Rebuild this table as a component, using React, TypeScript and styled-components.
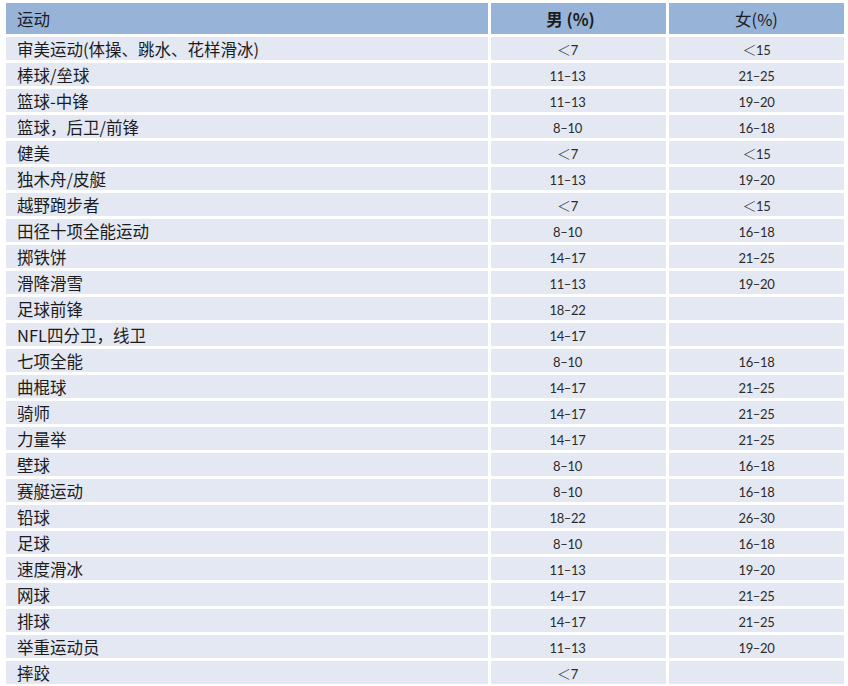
import React from "react";
import styled, { createGlobalStyle } from "styled-components";

const GlobalStyle = createGlobalStyle`
  html, body {
    margin: 0;
    padding: 0;
    background: #ffffff;
  }
  body {
    font-family: "Noto Sans CJK SC", "Noto Sans", sans-serif;
    color: #1f1f1f;
  }
`;

const Table = styled.table`
  margin-left: 3px;
  border-collapse: separate;
  border-spacing: 3px;
  table-layout: fixed;
  width: 844px;
`;

const HeadCell = styled.th<{ $align?: "left" | "center"; $bold?: boolean; $shift?: number }>`
  height: 31px;
  padding: 0 ${({ $shift }) => $shift || 0}px 0 ${({ $align }) => ($align === "left" ? "11px" : "0")};
  background: #97b3d8;
  text-align: ${({ $align }) => $align || "center"};
  font-size: 16.5px;
  line-height: 18px;
  font-weight: ${({ $bold }) => ($bold ? 700 : 400)};
  color: #1c1c1c;
  box-sizing: border-box;
`;

const NameCell = styled.td`
  height: 23px;
  padding: 0 0 0 11px;
  background: #e4e8f3;
  font-size: 16.5px;
  line-height: 18px;
  white-space: nowrap;
  color: #1c1c1c;
  box-sizing: border-box;
  vertical-align: middle;
`;

const NumCell = styled.td<{ $shift?: number }>`
  height: 23px;
  padding: 2px ${({ $shift }) => $shift || 0}px 0 0;
  background: #e4e8f3;
  text-align: center;
  font-family: "Lato", "Noto Sans CJK SC", sans-serif;
  font-size: 13px;
  line-height: 16px;
  letter-spacing: -0.3px;
  box-sizing: border-box;
  vertical-align: middle;
  color: #2b2b2b;
`;

const Lt = styled.span`
  font-family: "Noto Sans CJK SC", sans-serif;
  font-weight: 300;
  font-size: 14px;
  line-height: 14px;
`;

interface SportRow {
  name: string;
  male: string;
  female: string;
}

const rows: SportRow[] = [
  { name: "审美运动(体操、跳水、花样滑冰)", male: "<7", female: "<15" },
  { name: "棒球/垒球", male: "11–13", female: "21–25" },
  { name: "篮球-中锋", male: "11–13", female: "19–20" },
  { name: "篮球，后卫/前锋", male: "8–10", female: "16–18" },
  { name: "健美", male: "<7", female: "<15" },
  { name: "独木舟/皮艇", male: "11–13", female: "19–20" },
  { name: "越野跑步者", male: "<7", female: "<15" },
  { name: "田径十项全能运动", male: "8–10", female: "16–18" },
  { name: "掷铁饼", male: "14–17", female: "21–25" },
  { name: "滑降滑雪", male: "11–13", female: "19–20" },
  { name: "足球前锋", male: "18–22", female: "" },
  { name: "NFL四分卫，线卫", male: "14–17", female: "" },
  { name: "七项全能", male: "8–10", female: "16–18" },
  { name: "曲棍球", male: "14–17", female: "21–25" },
  { name: "骑师", male: "14–17", female: "21–25" },
  { name: "力量举", male: "14–17", female: "21–25" },
  { name: "壁球", male: "8–10", female: "16–18" },
  { name: "赛艇运动", male: "8–10", female: "16–18" },
  { name: "铅球", male: "18–22", female: "26–30" },
  { name: "足球", male: "8–10", female: "16–18" },
  { name: "速度滑冰", male: "11–13", female: "19–20" },
  { name: "网球", male: "14–17", female: "21–25" },
  { name: "排球", male: "14–17", female: "21–25" },
  { name: "举重运动员", male: "11–13", female: "19–20" },
  { name: "摔跤", male: "<7", female: "" },
];

function Value({ text }: { text: string }) {
  if (text.startsWith("<")) {
    return (
      <>
        <Lt>＜</Lt>
        {text.slice(1)}
      </>
    );
  }
  return <>{text}</>;
}

export default function App() {
  return (
    <>
      <GlobalStyle />
      <Table>
        <colgroup>
          <col style={{ width: 482 }} />
          <col style={{ width: 175 }} />
          <col style={{ width: 175 }} />
        </colgroup>
        <thead>
          <tr>
            <HeadCell $align="left">运动</HeadCell>
            <HeadCell $bold $shift={16}>
              男 (%)
            </HeadCell>
            <HeadCell>女(%)</HeadCell>
          </tr>
        </thead>
        <tbody>
          {rows.map((row) => (
            <tr key={row.name}>
              <NameCell>{row.name}</NameCell>
              <NumCell $shift={22}>
                <Value text={row.male} />
              </NumCell>
              <NumCell>
                <Value text={row.female} />
              </NumCell>
            </tr>
          ))}
        </tbody>
      </Table>
    </>
  );
}
